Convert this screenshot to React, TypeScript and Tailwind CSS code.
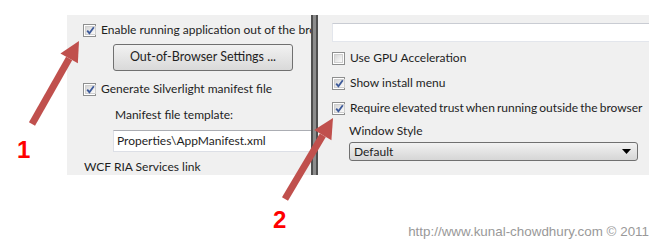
import React from 'react';

const font = "font-['Lato','Liberation_Sans',sans-serif]";

const CheckBox = ({ checked }: { checked: boolean }) => (
  <span className="w-[13px] h-[13px] shrink-0 border border-[#8e8f8f] bg-white p-[1px] flex">
    <span className="flex-1 flex items-center justify-center bg-gradient-to-br from-[#d6d6d6] to-[#fbfbfb] border border-[#cfcfcf]">
      {checked && (
        <svg width="9" height="9" viewBox="0 0 9 9">
          <path d="M1.2 4.6 L3.4 7.2 L7.8 1.2" fill="none" stroke="#3d5a9a" strokeWidth="1.8" />
        </svg>
      )}
    </span>
  </span>
);

const CheckRow = ({ checked, label, className = '' }: { checked: boolean; label: string; className?: string }) => (
  <div className={`flex items-center gap-[5px] h-[16px] whitespace-nowrap ${className}`}>
    <CheckBox checked={checked} />
    <span>{label}</span>
  </div>
);

const Arrow = ({ x1, y1, x2, y2 }: { x1: number; y1: number; x2: number; y2: number }) => {
  const ang = Math.atan2(y2 - y1, x2 - x1);
  const len = 20;
  const half = 10;
  const bx = x2 - Math.cos(ang) * len;
  const by = y2 - Math.sin(ang) * len;
  const px = -Math.sin(ang) * half;
  const py = Math.cos(ang) * half;
  return (
    <g>
      <line x1={x1} y1={y1} x2={bx} y2={by} stroke="#c0504d" strokeWidth="7" />
      <polygon points={`${x2},${y2} ${bx + px},${by + py} ${bx - px},${by - py}`} fill="#c0504d" />
    </g>
  );
};

export default function App() {
  return (
    <div className={`relative w-[662px] h-[241px] bg-white overflow-hidden text-[12px] text-[#1e1e1e] ${font}`}>
      <div className="flex pl-[67px] pt-[15px] h-[175px]">
        {/* left pane */}
        <div className="w-[244px] bg-[#f0f0f0] overflow-hidden flex flex-col pl-[16px] pt-[7px]">
          <CheckRow checked label="Enable running application out of the browser" />
          <button className="ml-[30px] mt-[6px] w-[180px] h-[27px] rounded-[3px] border border-[#707070] bg-gradient-to-b from-[#f2f2f2] to-[#d9d9d9] text-[12.5px] text-[#1e1e1e]">
            Out-of-Browser Settings ...
          </button>
          <CheckRow checked label="Generate Silverlight manifest file" className="mt-[10px]" />
          <div className="ml-[32px] mt-[10px] h-[16px] leading-[16px]">Manifest file template:</div>
          <div className="ml-[30px] mt-[7px] h-[22px] w-[220px] bg-white border border-[#dcdfe6] border-t-[#abadb3] flex items-center pl-[3px] whitespace-nowrap">
            Properties\AppManifest.xml
          </div>
          <div className="ml-[1px] mt-[7px] h-[16px] leading-[16px]">WCF RIA Services link</div>
        </div>

        {/* splitter */}
        <div className="w-[7px] flex">
          <div className="w-[2px] bg-[#4f4f4f]" />
          <div className="w-[3px] bg-[#8c8c8c]" />
          <div className="w-[2px] bg-[#4f4f4f]" />
        </div>

        {/* right pane */}
        <div className="w-[331px] bg-[#f0f0f0] overflow-hidden flex flex-col pl-[14px] pt-[8px]">
          <div className="h-[19px] w-[340px] bg-white border border-[#e3e6ec] border-t-[#c9ccd3]" />
          <CheckRow checked={false} label="Use GPU Acceleration" className="mt-[8px]" />
          <CheckRow checked label="Show install menu" className="mt-[9px]" />
          <CheckRow checked label="Require elevated trust when running outside the browser" className="mt-[9px] [word-spacing:-1px]" />
          <div className="ml-[17px] mt-[7px] h-[16px] leading-[16px]">Window Style</div>
          <div className="ml-[17px] mt-[3px] w-[289px] h-[19px] rounded-[3px] border border-[#707070] bg-gradient-to-b from-[#f2f2f2] to-[#d6d6d6] flex items-center justify-between pl-[4px] pr-[6px]">
            <span>Default</span>
            <svg width="9" height="5" viewBox="0 0 9 5">
              <polygon points="0,0 9,0 4.5,5" fill="#000" />
            </svg>
          </div>
        </div>
      </div>

      <div className="flex justify-end pr-[13px] pt-[49px]">
        <span className="text-[13.4px] leading-[16px] text-[#999999] font-['Liberation_Sans',sans-serif]">
          http://www.kunal-chowdhury.com © 2011
        </span>
      </div>

      {/* callouts */}
      <svg className="absolute left-0 top-0" width="662" height="241">
        <Arrow x1={32} y1={124} x2={79} y2={41} />
        <Arrow x1={285} y1={199} x2={333} y2={118} />
      </svg>
      <span className="absolute left-[17px] top-[136px] text-[24px] leading-[28px] font-bold text-[#ff0000] font-['Liberation_Sans',sans-serif]">1</span>
      <span className="absolute left-[273px] top-[206px] text-[24px] leading-[28px] font-bold text-[#ff0000] font-['Liberation_Sans',sans-serif]">2</span>
    </div>
  );
}
